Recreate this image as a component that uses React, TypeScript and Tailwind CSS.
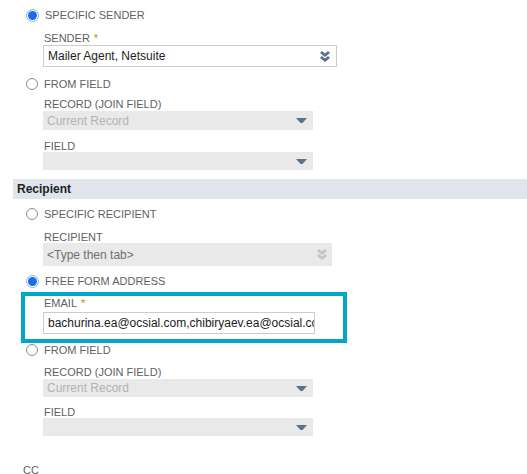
import React from "react";

const FONT = { fontFamily: '"Liberation Sans", Arial, sans-serif' };

function Radio({ checked, label, className = "" }: { checked?: boolean; label: string; className?: string }) {
  return (
    <div className={`flex h-[14px] items-center ${className}`}>
      {checked ? (
        <span className="ml-[26px] flex h-[13px] w-[13px] items-center justify-center rounded-full border border-[#8fb3ea] bg-white">
          <span className="h-[9px] w-[9px] rounded-full bg-[#1a6fe6]" />
        </span>
      ) : (
        <span className="ml-[26px] h-[12px] w-[12px] rounded-full border border-[#8c8c8c] bg-white" />
      )}
      <span className="ml-[6px] text-[11px] leading-[14px] text-[#5f5f5f]">{label}</span>
    </div>
  );
}

function Label({ text, required, className = "" }: { text: string; required?: boolean; className?: string }) {
  return (
    <div className={`ml-[44px] h-[14px] text-[11px] leading-[14px] text-[#5f5f5f] ${className}`}>
      {text}
      {required && <span className="ml-[4px] text-[#c7870f]">*</span>}
    </div>
  );
}

function DoubleChevron({ color }: { color: string }) {
  return (
    <svg width="10" height="11" viewBox="0 0 10 11">
      <path d="M0 2 L2 0 L5 2.6 L8 0 L10 2 L5 6 Z" fill={color} />
      <path d="M0 7 L2 5 L5 7.6 L8 5 L10 7 L5 11 Z" fill={color} />
    </svg>
  );
}

function Caret() {
  return (
    <svg width="11" height="5" viewBox="0 0 11 5">
      <path d="M0 0 H11 L6.5 5 H4.5 Z" fill="#5f7089" />
    </svg>
  );
}

function GreySelect({ value, className = "" }: { value?: string; className?: string }) {
  return (
    <div className={`ml-[43px] flex h-[18px] w-[270px] items-center justify-between bg-[#e9e9e9] pl-[4px] pr-[6px] ${className}`}>
      <span className="text-[12px] leading-[18px] text-[#b3b3b3]">{value}</span>
      <Caret />
    </div>
  );
}

export default function App() {
  return (
    <div className="min-h-screen bg-white" style={FONT}>
      <div className="flex flex-col">
        <Radio checked label="SPECIFIC SENDER" className="mt-[8px]" />
        <Label text="SENDER" required className="mt-[9px]" />
        <div className="ml-[43px] flex h-[22px] w-[294px] items-center justify-between border border-[#cccccc] bg-white pl-[4px] pr-[6px]">
          <span className="text-[12px] text-[#222]">Mailer Agent, Netsuite</span>
          <DoubleChevron color="#5b6f8d" />
        </div>
        <Radio label="FROM FIELD" className="mt-[10px]" />
        <Label text="RECORD (JOIN FIELD)" className="mt-[6px]" />
        <GreySelect value="Current Record" className="h-[19px]" />
        <Label text="FIELD" className="mt-[9px]" />
        <GreySelect className="mt-[-1px]" />

        <div className="ml-[13px] mt-[9px] flex h-[20px] items-center bg-[#e0e5ec] pl-[4px]">
          <span className="text-[12px] font-bold text-[#222]">Recipient</span>
        </div>

        <Radio label="SPECIFIC RECIPIENT" className="mt-[8px]" />
        <Label text="RECIPIENT" className="mt-[9px]" />
        <div className="mt-[-1px] ml-[43px] flex h-[23px] w-[289px] items-center justify-between bg-[#e9e9e9] pl-[4px] pr-[5px]">
          <span className="text-[12px] text-[#707070]">&lt;Type then tab&gt;</span>
          <DoubleChevron color="#c4c4c4" />
        </div>
        <Radio checked label="FREE FORM ADDRESS" className="mt-[8px]" />

        <div className="ml-[21px] mt-[4px] h-[51px] w-[326px] border-4 border-[#00a7c9] pl-[18px]">
          <div className="h-[14px] pl-[1px] text-[11px] leading-[14px] text-[#5f5f5f]">
            EMAIL<span className="ml-[4px] text-[#c7870f]">*</span>
          </div>
          <div className="mt-[2px] flex h-[22px] w-[272px] items-center overflow-hidden whitespace-nowrap border border-[#cccccc] bg-white pl-[4px]">
            <span className="text-[12px] text-[#222]">bachurina.ea@ocsial.com,chibiryaev.ea@ocsial.com</span>
          </div>
        </div>

        <Radio label="FROM FIELD" className="mt-[0px]" />
        <Label text="RECORD (JOIN FIELD)" className="mt-[8px]" />
        <GreySelect value="Current Record" />
        <Label text="FIELD" className="mt-[8px]" />
        <GreySelect className="mt-[-1px]" />

        <div className="ml-[23px] mt-[27px] h-[14px] text-[11px] leading-[14px] text-[#5f5f5f]">CC</div>
        <div className="h-[40px]" />
      </div>
    </div>
  );
}
